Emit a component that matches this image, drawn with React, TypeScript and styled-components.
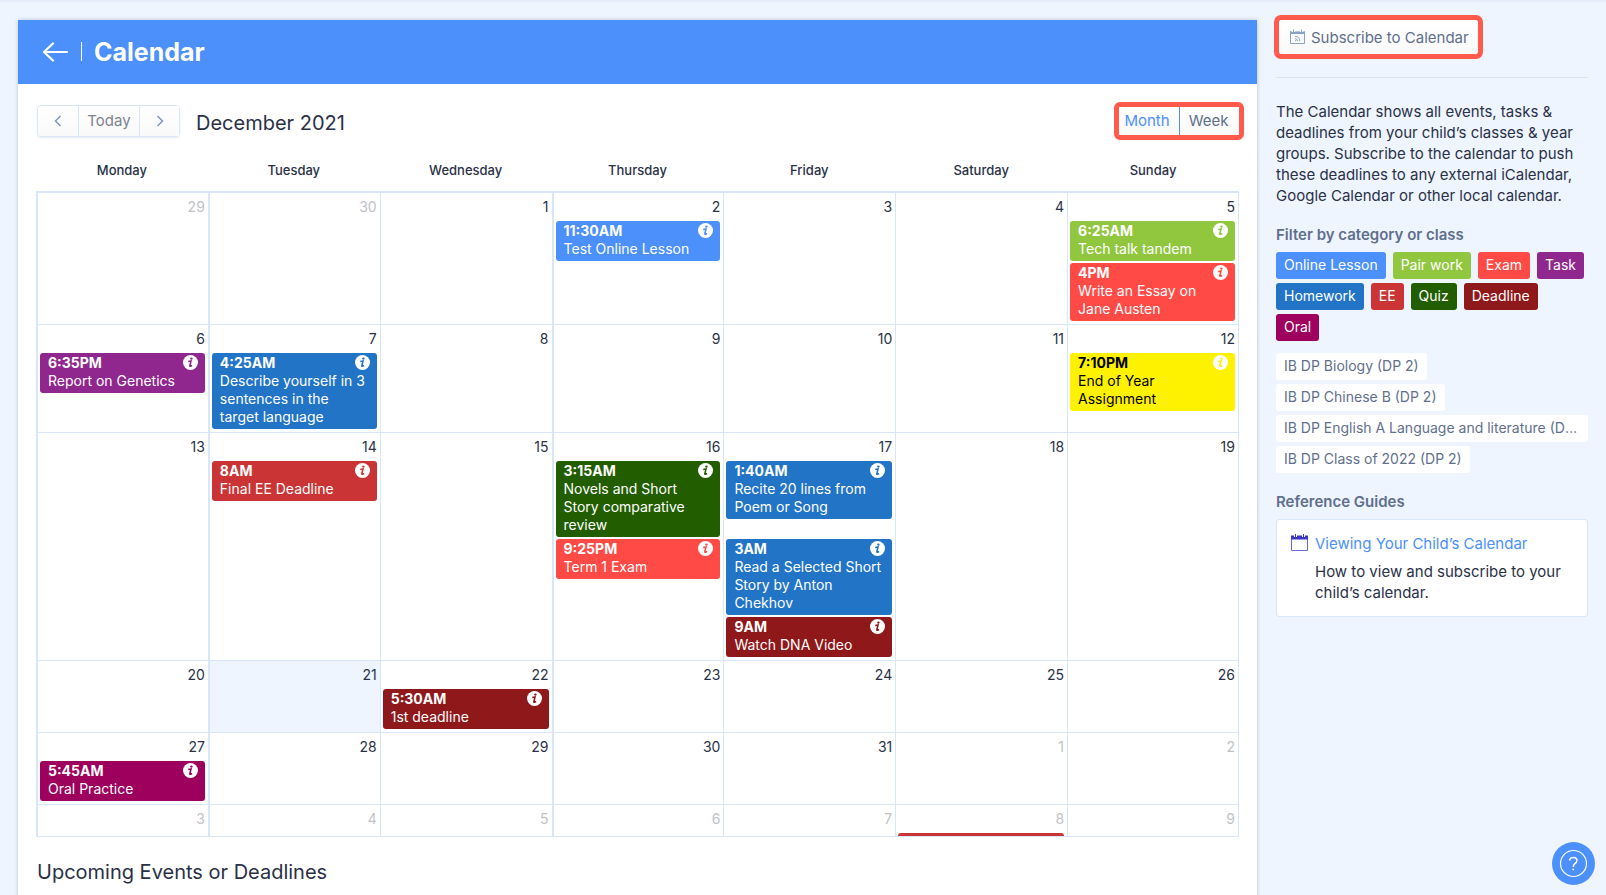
import React from "react";
import styled, { createGlobalStyle } from "styled-components";

const GlobalStyle = createGlobalStyle`
  *, *::before, *::after { box-sizing: border-box; }
  body {
    margin: 0;
    background: #eef5ff;
    color: #2a3147;
    font: 400 15px/21px Inter, "Liberation Sans", sans-serif;
    overflow: hidden;
  }
  h1, h2, h3, p, ul { margin: 0; padding: 0; }
  button { font: inherit; color: inherit; cursor: pointer; }
`;

const Page = styled.div`
  display: flex;
  gap: 19px;
  min-height: 100vh;
  padding: 20px 18px 0;
  box-shadow: inset 0 4px 3px -3px rgba(60, 90, 140, 0.08);
`;

const Panel = styled.main`
  flex: 1;
  min-width: 0;
  background: #fff;
  box-shadow: 0 0 4px rgba(60, 80, 110, 0.3);
`;

const Header = styled.header`
  display: flex;
  align-items: center;
  height: 64px;
  padding: 0 24px 1px;
  background: #4b90fb;
  color: #fff;
`;

const BackButton = styled.button`
  display: flex;
  padding: 0;
  border: 0;
  background: none;
`;

const Divider = styled.span`
  width: 1px;
  height: 19px;
  margin: 0 12px;
  background: #fff;
`;

const PageTitle = styled.h1`
  font-size: 25px;
  line-height: 32px;
  font-weight: 700;
`;

const Content = styled.div`
  padding: 20px 18px 0;
`;

const Toolbar = styled.div`
  display: flex;
  align-items: center;
  height: 34px;
`;

const NavGroup = styled.div`
  display: flex;
  height: 32px;
  border: 1px solid #d8e6f8;
  border-radius: 4px;
  box-shadow: 0 1px 2px rgba(60, 80, 110, 0.12);
  margin-left: 1px;
`;

const NavButton = styled.button<{ $wide?: boolean }>`
  display: flex;
  align-items: center;
  justify-content: center;
  width: ${(p) => (p.$wide ? 61 : 40)}px;
  padding: 0 0 1px;
  border: 0;
  border-radius: 4px;
  background: linear-gradient(#fff, #f9f9f9);
  color: ${(p) => (p.$wide ? "#7f838f" : "#7d98c0")};

  & + & { border-left: 1px solid #d8e6f8; border-radius: 0; }
`;

const MonthTitle = styled.h2`
  flex: 1;
  margin-left: 16px;
  padding-top: 3px;
  font-size: 20px;
  line-height: 28px;
  font-weight: 400;
`;

const ViewSwitch = styled.div`
  display: flex;
  height: 38px;
  margin-right: -5px;
  border: 5px solid #ff5a4b;
  border-radius: 6px;
  background: #ff5a4b;
`;

const ViewButton = styled.button<{ $active?: boolean }>`
  width: ${(p) => (p.$active ? 61 : 59)}px;
  padding: 0 ${(p) => (p.$active ? 4 : 2)}px 0 0;
  border: 0;
  border-right: ${(p) => (p.$active ? "1px solid #4b90fb" : "0")};
  background: linear-gradient(#fff, #f9f9f9);
  color: ${(p) => (p.$active ? "#4b90fb" : "#5f6f8c")};
  line-height: 28px;
`;

const CalendarScroller = styled.div`
  max-height: 699px;
  overflow: hidden;
  border-bottom: 1px solid #d8e6f8;
`;

const Grid = styled.table`
  width: 100%;
  table-layout: fixed;
  border-collapse: separate;
  border-spacing: 0;
`;

const WeekdayHead = styled.th`
  height: 53px;
  padding: 11px 0 0;
  font-size: 13px;
  line-height: 18px;
  font-weight: 500;
  text-align: center;
`;

const Day = styled.td<{ $today?: boolean; $muted?: boolean }>`
  padding: 0 3px 3px 2px;
  border-left: 1px solid #d8e6f8;
  border-bottom: 1px solid #d8e6f8;
  vertical-align: top;
  background: ${(p) => (p.$today ? "#eef5ff" : "#fff")};
  color: ${(p) => (p.$muted ? "#c0c2c8" : "inherit")};

  &:nth-child(1), &:nth-child(2), &:nth-child(4) { border-left-width: 2px; }
  &:last-child { border-right: 1px solid #d8e6f8; }
  tr:first-child > & { border-top: 2px solid #d8e6f8; }
`;

const DayNumber = styled.div`
  height: 28px;
  padding-top: 4px;
  font-size: 14px;
  line-height: 20px;
  text-align: right;
`;

const Slot = styled.div<{ $tall?: boolean }>`
  min-height: ${(p) => (p.$tall ? 76 : 0)}px;
  & + & { margin-top: 2px; }
`;

const Event = styled.article<{ $bg: string; $dark?: boolean }>`
  padding: 1px 7px 3px 8px;
  border-radius: 3px;
  background: ${(p) => p.$bg};
  color: ${(p) => (p.$dark ? "#000" : "#fff")};
  font-size: 14px;
  line-height: 18px;
`;

const EventTop = styled.div`
  display: flex;
  justify-content: space-between;
  height: 18px;
  font-weight: 700;

  svg { margin-top: 1px; }
`;

const Upcoming = styled.h2`
  margin: 21px 0 20px 1px;
  font-size: 20px;
  line-height: 28px;
  font-weight: 400;
`;

const Sidebar = styled.aside`
  flex: 0 0 312px;
  min-width: 0;
`;

const SubscribeButton = styled.button`
  display: flex;
  align-items: center;
  gap: 6px;
  height: 44px;
  margin: -5px 0 0 -2px;
  padding: 0 9px 0 11px;
  border: 5px solid #ff5a4b;
  border-radius: 7px;
  background: linear-gradient(#fff, #f9f9f9);
  color: #5f6f8c;
  white-space: nowrap;
`;

const Rule = styled.hr`
  height: 1px;
  margin: 18px 0 23px;
  border: 0;
  background: #d8e4f2;
`;

const Intro = styled.p`
  line-height: 21px;
`;

const SideHeading = styled.h3`
  margin: 18px 0 7px;
  color: #5f6f8c;
  font-size: 15px;
  line-height: 21px;
  font-weight: 600;
`;

const ChipList = styled.div<{ $stacked?: boolean }>`
  display: flex;
  flex-flow: ${(p) => (p.$stacked ? "column nowrap" : "row wrap")};
  align-items: flex-start;
  gap: 4px 7px;
  margin-bottom: ${(p) => (p.$stacked ? 17 : 12)}px;
  padding-right: ${(p) => (p.$stacked ? 0 : 4)}px;
`;

const Chip = styled.button<{ $bg?: string }>`
  max-width: 100%;
  height: 27px;
  padding: 0 8px 2px;
  border: 0;
  border-radius: 3px;
  overflow: hidden;
  text-overflow: ellipsis;
  white-space: nowrap;
  background: ${(p) => p.$bg ?? "#fff"};
  color: ${(p) => (p.$bg ? "#fff" : "#5f6f8c")};
  font-size: 14px;
`;

const GuideCard = styled.section`
  display: grid;
  grid-template-columns: 18px 1fr;
  gap: 7px 6px;
  padding: 13px 14px;
  border: 1px solid #d8e6f8;
  border-radius: 3px;
  background: #fff;

  p { grid-column: 2; }
  svg { margin-top: 1px; }
`;

const GuideLink = styled.a`
  color: #4b90fb;
  text-decoration: none;
`;

const HelpButton = styled.button`
  position: fixed;
  right: 11px;
  bottom: 10px;
  display: flex;
  padding: 0;
  border: 0;
  background: none;
`;

const ArrowIcon = () => (
  <svg width="27" height="22" viewBox="0 0 27 22" fill="none" stroke="#fff" strokeWidth="2.2" strokeLinecap="round" strokeLinejoin="round">
    <path d="M25 11H2M11 2.5L2 11L11 19.5" />
  </svg>
);

const Chevron = ({ right }: { right?: boolean }) => (
  <svg width="8" height="12" viewBox="0 0 8 12" fill="none" stroke="currentColor" strokeWidth="1.5">
    <path d={right ? "M1.5 1L6.5 6L1.5 11" : "M6.5 1L1.5 6L6.5 11"} />
  </svg>
);

const InfoIcon = ({ mark }: { mark: string }) => (
  <svg width="15" height="15" viewBox="0 0 15 15">
    <circle cx="7.5" cy="7.5" r="7.5" fill="#fff" />
    <circle cx="8.4" cy="3.6" r="1.2" fill={mark} />
    <path d="M5.2 6.5L8 6L6.8 10.8Q6.7 11.9 9.1 10.5" fill="none" stroke={mark} strokeWidth="1.6" />
  </svg>
);

const FeedCalendarIcon = () => (
  <svg width="15" height="16" viewBox="0 0 15 16" fill="none" stroke="#8aa2c6">
    <path d="M.5 2.5V14.5H14.5V2.5" />
    <path d="M0 3.7H15" strokeWidth="2.6" />
    <path d="M3.5 0V3M11.5 0V3" stroke="#fff" strokeWidth="3" />
    <path d="M3.5 .5V3M11.5 .5V3" />
    <path d="M5 7.4Q9.8 7.4 9.8 12.2M5 9.6Q7.6 9.6 7.6 12.2" />
    <circle cx="5.6" cy="11.6" r=".7" fill="#8aa2c6" stroke="none" />
  </svg>
);

const GuideIcon = () => (
  <svg width="17" height="17" viewBox="0 0 17 17" fill="none" stroke="#3a36cc">
    <path d="M.5 2V16.5H16.5V2" stroke="#6b66dc" />
    <path d="M0 3.5H17" strokeWidth="4" />
    <path d="M4.5 0V3M12.5 0V3" stroke="#fff" strokeWidth="3" />
    <path d="M4.5 0V3M12.5 0V3" />
  </svg>
);

const HelpIcon = () => (
  <svg width="43" height="43" viewBox="0 0 43 43" fill="none" stroke="#fff">
    <circle cx="21.5" cy="21.5" r="21.5" fill="#4b90fb" stroke="none" />
    <circle cx="21.5" cy="21.5" r="13" strokeWidth="1.2" />
    <path d="M17.6 18.6Q17.8 15.4 21.3 15.4Q24.9 15.4 24.9 18.4Q24.9 20.2 22.8 21.7Q21.3 22.9 21.3 25" strokeWidth="1.5" />
    <circle cx="21.3" cy="27.6" r="1" fill="#fff" stroke="none" />
  </svg>
);

interface CalendarEvent {
  time: string;
  title: string;
  bg: string;
  dark?: boolean;
  tall?: boolean;
}

const COLORS = {
  lesson: "#4b90fb",
  pair: "#91c73e",
  exam: "#ff4a45",
  task: "#90278e",
  homework: "#2274c7",
  ee: "#cb3434",
  quiz: "#225e00",
  deadline: "#8f181a",
  oral: "#9e005d",
};

const WEEKDAYS = ["Monday", "Tuesday", "Wednesday", "Thursday", "Friday", "Saturday", "Sunday"];

const WEEKS = [
  [29, 30, 1, 2, 3, 4, 5],
  [6, 7, 8, 9, 10, 11, 12],
  [13, 14, 15, 16, 17, 18, 19],
  [20, 21, 22, 23, 24, 25, 26],
  [27, 28, 29, 30, 31, 1, 2],
  [3, 4, 5, 6, 7, 8, 9],
];

/* Keyed by "week-day", both counted from zero. */
const EVENTS: Record<string, CalendarEvent[]> = {
  "0-3": [{ time: "11:30AM", title: "Test Online Lesson", bg: COLORS.lesson }],
  "0-6": [
    { time: "6:25AM", title: "Tech talk tandem", bg: COLORS.pair },
    { time: "4PM", title: "Write an Essay on Jane Austen", bg: COLORS.exam },
  ],
  "1-0": [{ time: "6:35PM", title: "Report on Genetics", bg: COLORS.task }],
  "1-1": [{ time: "4:25AM", title: "Describe yourself in 3 sentences in the target language", bg: COLORS.homework }],
  "1-6": [{ time: "7:10PM", title: "End of Year Assignment", bg: "#fff200", dark: true }],
  "2-1": [{ time: "8AM", title: "Final EE Deadline", bg: COLORS.ee }],
  "2-3": [
    { time: "3:15AM", title: "Novels and Short Story comparative review", bg: COLORS.quiz },
    { time: "9:25PM", title: "Term 1 Exam", bg: COLORS.exam },
  ],
  "2-4": [
    { time: "1:40AM", title: "Recite 20 lines from Poem or Song", bg: COLORS.homework, tall: true },
    { time: "3AM", title: "Read a Selected Short Story by Anton Chekhov", bg: COLORS.homework },
    { time: "9AM", title: "Watch DNA Video", bg: COLORS.deadline },
  ],
  "3-2": [{ time: "5:30AM", title: "1st deadline", bg: COLORS.deadline }],
  "4-0": [{ time: "5:45AM", title: "Oral Practice", bg: COLORS.oral }],
  "5-5": [{ time: "", title: "", bg: COLORS.ee }],
};

const CATEGORIES: [string, string][] = [
  ["Online Lesson", COLORS.lesson],
  ["Pair work", COLORS.pair],
  ["Exam", COLORS.exam],
  ["Task", COLORS.task],
  ["Homework", COLORS.homework],
  ["EE", COLORS.ee],
  ["Quiz", COLORS.quiz],
  ["Deadline", COLORS.deadline],
  ["Oral", COLORS.oral],
];

const CLASSES = [
  "IB DP Biology (DP 2)",
  "IB DP Chinese B (DP 2)",
  "IB DP English A Language and literature (DP 2)",
  "IB DP Class of 2022 (DP 2)",
];

const isMuted = (week: number, date: number) => (week === 0 && date > 7) || (week > 3 && date < 10);

export default function App() {
  return (
    <>
      <GlobalStyle />
      <Page>
        <Panel>
          <Header>
            <BackButton aria-label="Back"><ArrowIcon /></BackButton>
            <Divider />
            <PageTitle>Calendar</PageTitle>
          </Header>
          <Content>
            <Toolbar>
              <NavGroup>
                <NavButton aria-label="Previous month"><Chevron /></NavButton>
                <NavButton $wide>Today</NavButton>
                <NavButton aria-label="Next month"><Chevron right /></NavButton>
              </NavGroup>
              <MonthTitle>December 2021</MonthTitle>
              <ViewSwitch>
                <ViewButton $active>Month</ViewButton>
                <ViewButton>Week</ViewButton>
              </ViewSwitch>
            </Toolbar>
            <CalendarScroller>
              <Grid>
                <thead>
                  <tr>
                    {WEEKDAYS.map((name) => <WeekdayHead key={name} scope="col">{name}</WeekdayHead>)}
                  </tr>
                </thead>
                <tbody>
                  {WEEKS.map((week, w) => (
                    <tr key={w}>
                      {week.map((date, d) => (
                        <Day key={d} $today={w === 3 && date === 21} $muted={isMuted(w, date)}>
                          <DayNumber>{date}</DayNumber>
                          {EVENTS[`${w}-${d}`]?.map((event) => (
                            <Slot key={event.time} $tall={event.tall}>
                              <Event $bg={event.bg} $dark={event.dark}>
                                <EventTop>
                                  {event.time}
                                  {event.time && <InfoIcon mark={event.bg} />}
                                </EventTop>
                                {event.title}
                              </Event>
                            </Slot>
                          ))}
                        </Day>
                      ))}
                    </tr>
                  ))}
                </tbody>
              </Grid>
            </CalendarScroller>
            <Upcoming>Upcoming Events or Deadlines</Upcoming>
          </Content>
        </Panel>
        <Sidebar>
          <SubscribeButton><FeedCalendarIcon />Subscribe to Calendar</SubscribeButton>
          <Rule />
          <Intro>
            The Calendar shows all events, tasks &amp; deadlines from your child’s classes &amp; year groups.
            Subscribe to the calendar to push these deadlines to any external iCalendar, Google Calendar or
            other local calendar.
          </Intro>
          <SideHeading>Filter by category or class</SideHeading>
          <ChipList>
            {CATEGORIES.map(([name, bg]) => <Chip key={name} $bg={bg}>{name}</Chip>)}
          </ChipList>
          <ChipList $stacked>
            {CLASSES.map((name) => <Chip key={name}>{name}</Chip>)}
          </ChipList>
          <SideHeading>Reference Guides</SideHeading>
          <GuideCard>
            <GuideIcon />
            <GuideLink href="#guide">Viewing Your Child’s Calendar</GuideLink>
            <p>How to view and subscribe to your child’s calendar.</p>
          </GuideCard>
        </Sidebar>
      </Page>
      <HelpButton aria-label="Help"><HelpIcon /></HelpButton>
    </>
  );
}
